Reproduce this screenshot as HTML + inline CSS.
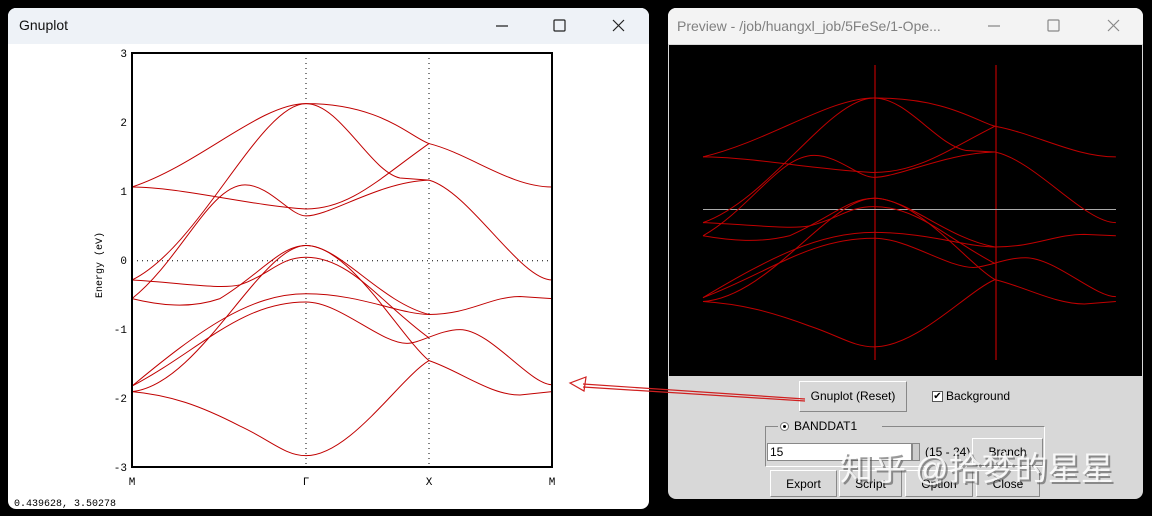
<!DOCTYPE html>
<html><head><meta charset="utf-8"><style>
*{margin:0;padding:0;box-sizing:border-box}
body{width:1152px;height:516px;background:#000;position:relative;overflow:hidden;font-family:"Liberation Sans",sans-serif}
.win{position:absolute;border-radius:8px;overflow:hidden}
.tb{position:absolute;left:0;right:0;top:0;height:36px;font-size:14px}
.abs{position:absolute}
.btn{position:absolute;background:#d8d8d8;border:1px solid #fff;border-right-color:#888;border-bottom-color:#888;font-size:12px;text-align:center;color:#000}
</style></head><body>
<div class="win" style="left:8px;top:8px;width:641px;height:501px;background:#fff">
 <div class="tb" style="background:#eef2f7"><span class="abs" style="left:11px;top:9px;color:#111">Gnuplot</span>
 <svg class="abs" style="left:0;top:0" width="641" height="36"><g stroke="#222" stroke-width="1.2" fill="none"><path d="M488 18h12"/><rect x="546" y="12" width="11" height="11" rx="1"/><path d="M605 12l11 11M616 12l-11 11"/></g></svg></div>
</div>
<svg class="abs" style="left:0;top:0" width="1152" height="516">
 <defs>
 <g id="bands" fill="none" stroke="#c00000" stroke-width="1">
  <path vector-effect="non-scaling-stroke" d="M132,-1.9 C170,-1.95 200,-2.1 240,-2.4 C270,-2.6 285,-2.83 306,-2.83 C350,-2.83 400,-1.7 429,-1.45 C460,-1.6 490,-1.95 520,-1.95 L552,-1.9"/>
  <path vector-effect="non-scaling-stroke" d="M132,-1.82 C200,-1.3 240,-0.6 306,-0.6 C340,-0.6 380,-1.2 407,-1.2 C420,-1.2 440,-1.0 460,-1.0 C490,-1.0 530,-1.8 552,-1.8"/>
  <path vector-effect="non-scaling-stroke" d="M132,-1.82 C200,-1.0 250,-0.48 306,-0.48 C360,-0.48 400,-0.78 429,-0.78 C470,-0.78 490,-0.52 520,-0.52 L552,-0.55"/>
  <path vector-effect="non-scaling-stroke" d="M132,-1.9 C200,-1.8 260,0.22 306,0.22 C350,0.22 400,-1.1 429,-1.45"/>
  <path vector-effect="non-scaling-stroke" d="M132,-0.28 C180,-0.32 220,-0.42 240,-0.35 C270,-0.2 280,0.05 306,0.05 C350,0.05 380,-0.6 429,-1.12"/>
  <path vector-effect="non-scaling-stroke" d="M132,-0.55 C160,-0.65 190,-0.7 220,-0.55 C260,-0.2 280,0.22 306,0.22 C340,0.22 380,-0.6 429,-0.78"/>
  <path vector-effect="non-scaling-stroke" d="M132,-0.55 C180,0 210,1.1 245,1.1 C270,1.1 290,0.65 306,0.65 C330,0.65 380,1.15 429,1.17"/>
  <path vector-effect="non-scaling-stroke" d="M132,-0.28 C200,0.2 260,2.28 306,2.28 C340,2.28 370,1.3 400,1.2 L429,1.17 C470,1.0 520,-0.28 552,-0.28"/>
  <path vector-effect="non-scaling-stroke" d="M132,1.07 C180,1.07 250,0.8 306,0.75 C350,0.75 380,1.2 429,1.7 C470,1.55 510,1.07 552,1.07"/>
  <path vector-effect="non-scaling-stroke" d="M132,1.07 C200,1.4 260,2.28 306,2.28 C380,2.28 410,1.8 429,1.7"/>
 </g></defs>
 <g stroke="#000" stroke-dasharray="1,4" stroke-width="1"><path d="M306 53V467M429 53V467M132 260.7H552"/></g>
 <g transform="translate(0,260.7) scale(1,-68.9)"><use href="#bands"/></g>
 <rect x="132" y="53" width="420" height="414" fill="none" stroke="#000" stroke-width="2"/>
 <g font-family="Liberation Mono,monospace" font-size="11" fill="#000" text-anchor="end">
  <text x="127" y="57">3</text><text x="127" y="126">2</text><text x="127" y="195">1</text><text x="127" y="264">0</text><text x="127" y="333">-1</text><text x="127" y="402">-2</text><text x="127" y="471">-3</text>
 </g>
 <g font-family="Liberation Mono,monospace" font-size="11" fill="#000" text-anchor="middle">
  <text x="132" y="485">M</text><text x="306" y="485">Γ</text><text x="429" y="485">X</text><text x="552" y="485">M</text>
 </g>
 <text transform="translate(102,265) rotate(-90)" font-family="Liberation Mono,monospace" font-size="10" text-anchor="middle">Energy (eV)</text>
 <text x="14" y="506" font-family="Liberation Mono,monospace" font-size="10">0.439628,  3.50278</text>
</svg>
<div class="win" style="left:668px;top:8px;width:475px;height:491px;background:#d8d8d8">
 <div class="tb" style="background:#f3f3f3"><span class="abs" style="left:9px;top:10px;color:#808080;font-size:14px">Preview - /job/huangxl_job/5FeSe/1-Ope...</span>
 <svg class="abs" style="left:0;top:0" width="475" height="36"><g stroke="#888" stroke-width="1.2" fill="none"><path d="M320 18h12"/><rect x="380" y="12" width="11" height="11" rx="1"/><path d="M440 12l11 11M451 12l-11 11"/></g></svg></div>
 <div class="abs" style="left:1px;top:37px;width:473px;height:331px;background:#000"></div>
 <div class="btn" style="left:131px;top:373px;width:108px;height:31px;line-height:29px">Gnuplot (Reset)</div>
 <div class="abs" style="left:264px;top:383px;width:11px;height:11px;background:#fff;border:1px solid #555;font-size:10px;line-height:9px;text-align:center">✔</div>
 <span class="abs" style="left:278px;top:381px;font-size:12px">Background</span>
 <div class="abs" style="left:97px;top:418px;width:280px;height:41px;border:1px solid #888;border-right-color:#fff;border-bottom-color:#fff"></div>
 <div class="abs" style="left:110px;top:411px;width:104px;height:14px;background:#d8d8d8"></div>
 <div class="abs" style="left:112px;top:414px;width:9px;height:9px;border-radius:50%;background:#fff;border:1px solid #777"><div class="abs" style="left:2px;top:2px;width:3px;height:3px;border-radius:50%;background:#000"></div></div>
 <span class="abs" style="left:126px;top:411px;font-size:12px">BANDDAT1</span>
 <div class="abs" style="left:99px;top:435px;width:145px;height:18px;background:#fff;border:1px solid #888;font-size:12px;padding-left:2px;line-height:16px">15</div>
 <div class="abs" style="left:244px;top:435px;width:8px;height:18px;background:#ccc;border:1px solid #888"></div>
 <span class="abs" style="left:257px;top:437px;font-size:12px">(15 - 24)</span>
 <div class="btn" style="left:304px;top:430px;width:71px;height:28px;line-height:27px">Branch</div>
 <div class="btn" style="left:102px;top:462px;width:67px;height:27px;line-height:26px">Export</div>
 <div class="btn" style="left:171px;top:462px;width:63px;height:27px;line-height:26px">Script</div>
 <div class="btn" style="left:237px;top:462px;width:68px;height:27px;line-height:26px">Option</div>
 <div class="btn" style="left:308px;top:462px;width:64px;height:27px;line-height:26px">Close</div>
</div>
<svg class="abs" style="left:0;top:0" width="1152" height="516">
 <path d="M875 65V360M996 65V360" stroke="#d00" stroke-width="1"/>
 <path d="M703 209.5H1116" stroke="#aaa" stroke-width="1"/>
 <g transform="translate(703,209) scale(0.983,-48.7) translate(-132,0)"><use href="#bands" style="stroke:#e00000"/></g>
 <g stroke="#d02020" stroke-width="1.2" fill="none"><path d="M805 399L583 384M805 401L583 387"/><path d="M570 383L586 377L584 391Z"/></g>
 <text x="842" y="482" font-family="Liberation Sans,'Noto Sans CJK SC',sans-serif" font-size="33" fill="#555" fill-opacity="0.6">知乎 @拾梦的星星</text>
 <text x="840" y="480" font-family="Liberation Sans,'Noto Sans CJK SC',sans-serif" font-size="33" fill="#fff" fill-opacity="0.85">知乎 @拾梦的星星</text>
</svg>
</body></html>
